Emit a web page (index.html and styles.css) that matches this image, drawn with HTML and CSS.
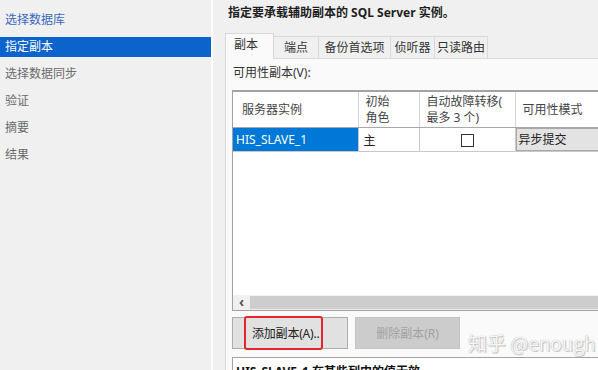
FILE: index.html
```html
<!DOCTYPE html>
<html lang="zh-CN">
<head>
    <meta charset="UTF-8">
    <title>新建可用性组 - 指定副本</title>
    <link rel="stylesheet" href="styles.css">
</head>
<body>
    <div class="wizard">
        <ul class="steps">
            <li class="step link">选择数据库</li>
            <li class="step active">指定副本</li>
            <li class="step">选择数据同步</li>
            <li class="step">验证</li>
            <li class="step">摘要</li>
            <li class="step">结果</li>
        </ul>
        <div class="divider"></div>

        <div class="main">
            <h1>指定要承载辅助副本的 SQL Server 实例。</h1>

            <div class="tabs">
                <div class="tab active">副本</div>
                <div class="tab t-endpoint">端点</div>
                <div class="tab t-backup">备份首选项</div>
                <div class="tab t-listener">侦听器</div>
                <div class="tab t-readonly">只读路由</div>
            </div>

            <div class="panel">
                <div class="label">可用性副本(V):</div>

                <div class="grid">
                    <table class="replicas">
                        <colgroup>
                            <col class="c-server">
                            <col class="c-role">
                            <col class="c-failover">
                            <col class="c-mode">
                        </colgroup>
                        <thead>
                            <tr>
                                <th class="first">服务器实例</th>
                                <th>初始<br>角色</th>
                                <th>自动故障转移(<br>最多 3 个)</th>
                                <th>可用性模式</th>
                            </tr>
                        </thead>
                        <tbody>
                            <tr>
                                <td class="selected">HIS_SLAVE_1</td>
                                <td>主</td>
                                <td class="center"><span class="checkbox"></span></td>
                                <td class="combo"><span class="combo-box">异步提交</span></td>
                            </tr>
                        </tbody>
                    </table>
                    <div class="grid-fill"></div>
                    <div class="hscroll">
                        <span class="arrow">&lsaquo;</span>
                        <span class="thumb"></span>
                    </div>
                </div>

                <div class="actions">
                    <button class="btn">添加副本(A)..</button>
                    <button class="btn" disabled>删除副本(R)</button>
                    <span class="highlight"></span>
                </div>

                <div class="status">HIS_SLAVE_1 在某些列中的值无效</div>
            </div>
        </div>
    </div>

    <div class="watermark">知乎 @enough</div>
</body>
</html>
```

FILE: styles.css
```css
body {
    margin: 0;
    width: 598px;
    height: 370px;
    overflow: hidden;
    background-color: #f0f0f0;
    font-family: "Noto Sans", "Noto Sans CJK SC", sans-serif;
    font-size: 12px;
    color: #333;
    position: relative;
}
.wizard {
    display: flex;
    height: 370px;
    overflow: hidden;
}
.steps {
    list-style: none;
    margin: 0;
    padding: 10px 0 0 0;
    width: 211px;
    flex-shrink: 0;
    display: flex;
    flex-direction: column;
    gap: 7px;
}
.step {
    height: 20px;
    line-height: 20px;
    padding-left: 5px;
    color: #6b6b6b;
}
.step.link {
    color: #3a68c0;
}
.step.active {
    background-color: #0b63cb;
    color: white;
}
.divider {
    width: 2px;
    flex-shrink: 0;
    background-color: #fbfbfb;
}
.main {
    padding: 5px 0 0 12px;
    flex-shrink: 0;
    width: 420px;
}
h1 {
    margin: 0 0 0 3px;
    font-size: 12px;
    line-height: 16px;
    height: 16px;
    font-weight: bold;
    color: #1e1e1e;
    white-space: nowrap;
}
.tabs {
    display: flex;
    align-items: flex-end;
    height: 25px;
    margin-top: 12px;
}
.tab {
    box-sizing: border-box;
    height: 22px;
    line-height: 21px;
    text-align: center;
    white-space: nowrap;
    background-color: #f0f0f0;
    border: 1px solid #d9d9d9;
    border-bottom: none;
    border-left: none;
    color: #333;
}
.t-endpoint { width: 45px; }
.t-backup { width: 72px; }
.t-listener { width: 44px; }
.t-readonly { width: 53px; }
.tab.active {
    width: 49px;
    height: 26px;
    line-height: 22px;
    text-align: left;
    padding-left: 8px;
    background-color: #fafafa;
    border-left: 1px solid #d9d9d9;
    position: relative;
    margin-bottom: -1px;
    z-index: 1;
}
.panel {
    background-color: #fafafa;
    border: 1px solid #d9d9d9;
    padding: 6px 0 0 6px;
    height: 320px;
}
.label {
    line-height: 16px;
    padding-left: 1px;
    margin-bottom: 9px;
}
.grid {
    display: flex;
    flex-direction: column;
    height: 218px;
    background: white;
    border-top: 2px solid #a3a3a3;
    border-left: 1px solid #a3a3a3;
    border-bottom: 1px solid #a3a3a3;
}
.replicas {
    border-collapse: collapse;
    table-layout: fixed;
    width: 420px;
}
.c-server { width: 125px; }
.c-role { width: 61px; }
.c-failover { width: 96px; }
.replicas th {
    height: 35px;
    padding: 0 0 0 7px;
    text-align: left;
    font-weight: normal;
    line-height: 16px;
    color: #444;
    white-space: nowrap;
    border-right: 1px solid #d4d4d4;
    border-bottom: 1px solid #a8a8a8;
}
.replicas th.first {
    padding-left: 9px;
}
.replicas td {
    height: 23px;
    padding: 0 0 0 5px;
    border-right: 1px solid #c8c8c8;
    border-bottom: 1px solid #c8c8c8;
    color: #222;
}
.replicas td.selected {
    background-color: #0078d7;
    color: white;
    padding-left: 3px;
}
.replicas td.center {
    text-align: center;
    padding: 0;
}
.checkbox {
    display: inline-block;
    width: 11px;
    height: 11px;
    border: 1px solid #333;
    background: white;
    vertical-align: middle;
}
.replicas td.combo {
    padding: 0;
}
.combo-box {
    display: block;
    height: 21px;
    line-height: 21px;
    padding-left: 2px;
    background-color: #e3e3e3;
    border: 1px solid #a8a8a8;
}
.grid-fill {
    flex: 1;
}
.hscroll {
    display: flex;
    height: 15px;
    background-color: #f0f0f0;
}
.arrow {
    width: 17px;
    line-height: 13px;
    text-align: center;
    font-size: 14px;
    font-weight: bold;
    color: #555;
}
.thumb {
    flex: 1;
    margin: 1px 0;
    background-color: #cdcdcd;
}
.actions {
    display: flex;
    gap: 7px;
    margin-top: 6px;
    position: relative;
}
.btn {
    height: 32px;
    padding: 0;
    font-family: inherit;
    font-size: 12px;
    color: #222;
    background-color: #e1e1e1;
    border: 1px solid #adadad;
    white-space: nowrap;
}
.btn:first-child {
    width: 116px;
    text-align: left;
    padding-left: 19px;
    letter-spacing: -0.2px;
}
.btn:disabled {
    width: 105px;
    color: #a2a2a2;
    background-color: #cccccc;
    border-color: #c4c4c4;
}
.highlight {
    position: absolute;
    left: 12px;
    top: -1px;
    width: 75px;
    height: 30px;
    border: 2px solid #e2262b;
    border-radius: 3px;
}
.status {
    margin-top: 8px;
    background: white;
    border: 1px solid #a3a3a3;
    padding: 4px 0 0 3px;
    font-weight: bold;
    color: #111;
    height: 30px;
    white-space: nowrap;
}
.watermark {
    position: absolute;
    left: 468px;
    top: 331px;
    font-family: "Noto Sans CJK SC", sans-serif;
    font-size: 19px;
    line-height: 24px;
    color: #f6f6f6;
    text-shadow: 0 0 1px #a8a8a8, 1px 1px 1px #c4c4c4;
}
```
